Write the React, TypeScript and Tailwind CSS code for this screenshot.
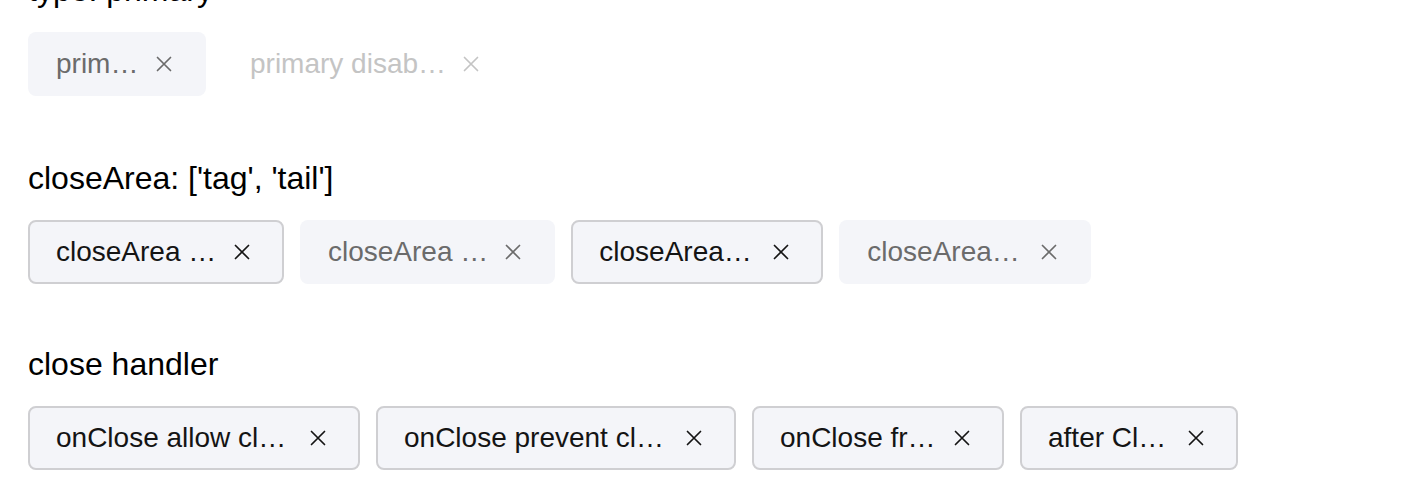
type TagItem = {
  label: string;
  textW: string;
  variant: 'outline' | 'muted' | 'disabled';
};

const SECTIONS: { title: string; gap: string; tags: TagItem[] }[] = [
  {
    title: 'type: primary',
    gap: '',
    tags: [
      { label: 'prim…', textW: 'min-w-[83px]', variant: 'muted' },
      { label: 'primary disab…', textW: 'min-w-[192px]', variant: 'disabled' },
    ],
  },
  {
    title: "closeArea: ['tag', 'tail']",
    gap: 'mt-[58px]',
    tags: [
      { label: 'closeArea …', textW: 'min-w-[161px]', variant: 'outline' },
      { label: 'closeArea …', textW: 'min-w-[159px]', variant: 'muted' },
      { label: 'closeArea…', textW: 'min-w-[157px]', variant: 'outline' },
      { label: 'closeArea…', textW: 'min-w-[157px]', variant: 'muted' },
    ],
  },
  {
    title: 'close handler',
    gap: 'mt-[56px]',
    tags: [
      { label: 'onClose allow cl…', textW: 'min-w-[237px]', variant: 'outline' },
      { label: 'onClose prevent cl…', textW: 'min-w-[265px]', variant: 'outline' },
      { label: 'onClose fr…', textW: 'min-w-[157px]', variant: 'outline' },
      { label: 'after Cl…', textW: 'min-w-[123px]', variant: 'outline' },
    ],
  },
];

const VARIANT: Record<TagItem['variant'], string> = {
  outline: 'bg-[#f4f5f9] text-[#141414] border-2 border-[#cfcfd2]',
  muted: 'bg-[#f4f5f9] text-[#6b6b6b] border-2 border-transparent',
  disabled: 'bg-transparent text-[#c4c4c4] border-2 border-transparent',
};

function CloseIcon() {
  return (
    <svg className="w-[32px] h-[32px] flex-shrink-0" viewBox="0 0 32 32" fill="none">
      <path d="M9.5 9.5l13 13M22.5 9.5l-13 13" stroke="currentColor" strokeWidth={1.7} strokeLinecap="round" />
    </svg>
  );
}

function Tag({ tag }: { tag: TagItem }) {
  return (
    <span
      className={`inline-flex items-center h-[64px] rounded-[8px] pl-[26px] pr-[24px] text-[28px] leading-none ${VARIANT[tag.variant]}`}
    >
      <span className={`${tag.textW} whitespace-nowrap`}>{tag.label}</span>
      <span className="ml-[9px] flex items-center">
        <CloseIcon />
      </span>
    </span>
  );
}

export default function App() {
  return (
    <div
      className="w-[1404px] h-[500px] overflow-hidden bg-white"
      style={{ fontFamily: '"Liberation Sans", Arial, Helvetica, sans-serif' }}
    >
      <div className="px-[28px] -mt-[34px]">
        {SECTIONS.map(s => (
          <section key={s.title} className={s.gap}>
            {/* Section title */}
            <h2 className="text-[32px] leading-[48px] text-black font-normal mb-[18px]">{s.title}</h2>
            <div className="flex items-center gap-[16px]">
              {s.tags.map((t, j) => (
                <Tag key={j} tag={t} />
              ))}
            </div>
          </section>
        ))}
      </div>
    </div>
  );
}
